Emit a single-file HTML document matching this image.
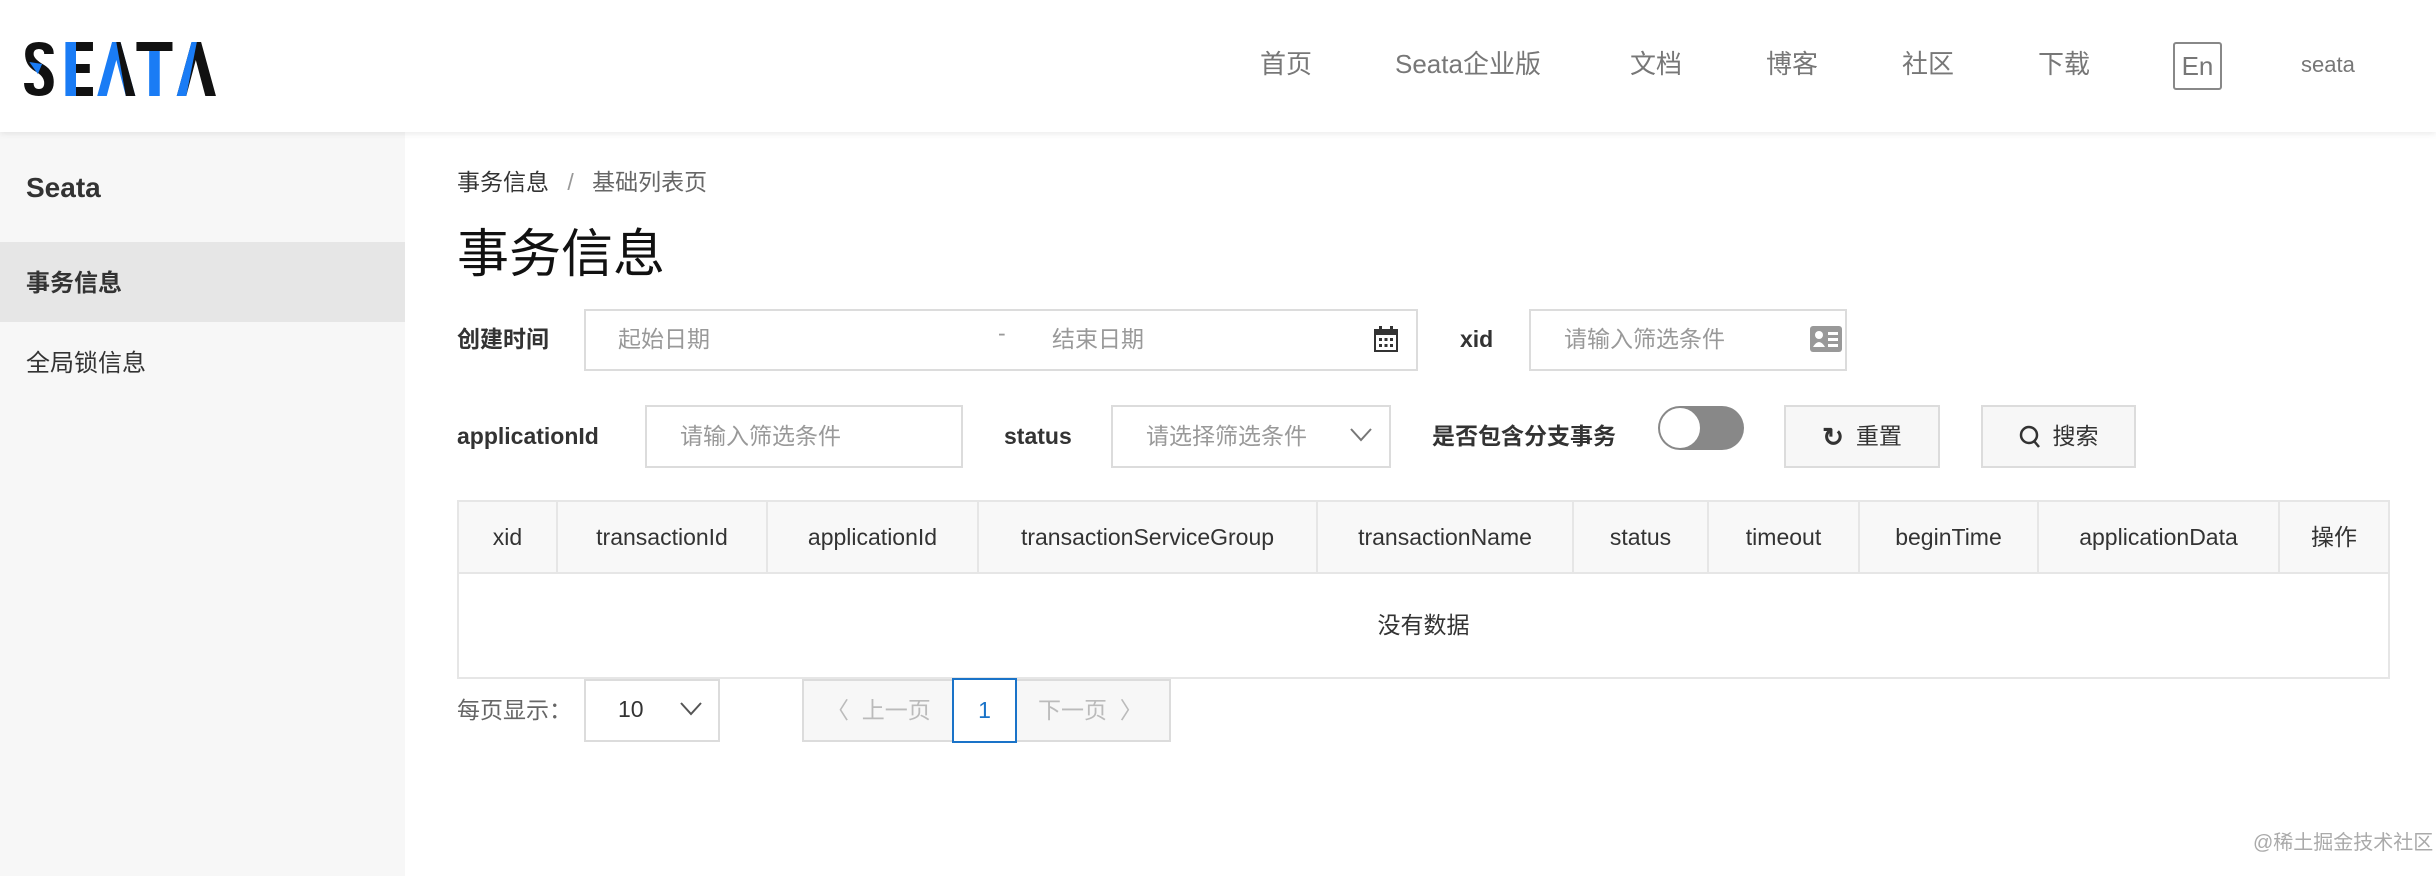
<!DOCTYPE html>
<html><head><meta charset="utf-8"><style>
*{box-sizing:border-box;margin:0;padding:0}
body{width:2436px;height:876px;position:relative;overflow:hidden;background:#fff;font-family:"Liberation Sans","Noto Sans CJK SC",sans-serif;color:#333}
.a{position:absolute;white-space:nowrap}
.hdr{position:absolute;left:0;top:0;width:2436px;height:132px;background:#fff;box-shadow:0 2px 6px rgba(0,0,0,.08);z-index:2}
.nav{position:absolute;top:44px;font-size:26px;color:#777;line-height:40px}
.side{position:absolute;left:0;top:132px;width:405px;height:744px;background:#f7f7f7}
.box{position:absolute;border:2px solid #dcdcdc;background:#fff}
.ph{color:#999;font-size:23px}
.lbl{font-size:23px;font-weight:bold;color:#333}
.btn{position:absolute;border:2px solid #dcdcdc;background:#f7f7f7;font-size:23px;color:#333;display:flex;align-items:center;justify-content:center;gap:12px;line-height:1}
table{position:absolute;left:457px;top:500px;width:1933px;border-collapse:collapse;font-size:23px}
th{height:72px;background:#f8f8f8;border:2px solid #e6e6e6;font-weight:normal;color:#333;line-height:1}
td{height:105px;border:2px solid #e6e6e6;text-align:center;color:#333;line-height:1}
</style></head><body>
<div class="hdr">
 <svg class="a" style="left:23px;top:42px" width="194" height="54" viewBox="0 0 183 54" preserveAspectRatio="none">
  <path d="M2 12 Q2 0 15 0 Q29 0 29 12 L20 12 Q20 7 15 7 Q10 7 10 12 Q10 17 20 23 Q29 29 29 40 Q29 54 15 54 Q1 54 1 41 L10 41 Q10 47 15 47 Q20 47 20 41 Q20 34 11 29 Q2 23 2 12Z" fill="#111"/>
  <path d="M6 20 L18 22 L14 32 Z" fill="#1a7cf5"/>
  <rect x="40" y="0" width="10" height="54" fill="#1a7cf5"/><rect x="50" y="0" width="16" height="9" fill="#111"/><rect x="50" y="22" width="13" height="9" fill="#111"/><rect x="50" y="45" width="16" height="9" fill="#111"/>
  <path d="M70 54 L84 0 L92 0 L106 54 L97 54 L88 18 L79 54Z" fill="#1a7cf5"/><path d="M88 0 L92 0 L106 54 L97 54 Z" fill="#111"/>
  <rect x="107" y="0" width="34" height="9" fill="#111"/><rect x="119" y="9" width="10" height="45" fill="#1a7cf5"/>
  <path d="M145 54 L159 0 L168 0 L182 54 L172 54 L163 18 L154 54Z" fill="#111"/><path d="M145 54 L159 0 L164 0 L154 54Z" fill="#1a7cf5"/>
 </svg>
 <div class="nav a" style="left:1260px">首页</div>
 <div class="nav a" style="left:1395px">Seata企业版</div>
 <div class="nav a" style="left:1630px">文档</div>
 <div class="nav a" style="left:1766px">博客</div>
 <div class="nav a" style="left:1902px">社区</div>
 <div class="nav a" style="left:2038px">下载</div>
 <div class="a" style="left:2173px;top:42px;width:49px;height:48px;border:2px solid #888;border-radius:3px;font-size:26px;color:#777;text-align:center;line-height:44px">En</div>
 <div class="a" style="left:2301px;top:52px;font-size:22px;color:#777">seata</div>
</div>
<div class="side">
 <div class="a" style="left:26px;top:40px;font-size:28px;font-weight:bold;color:#333">Seata</div>
 <div class="a" style="left:0;top:110px;width:405px;height:80px;background:#e6e6e6"></div>
 <div class="a" style="left:26px;top:131px;font-size:24px;font-weight:bold;color:#333">事务信息</div>
 <div class="a" style="left:26px;top:211px;font-size:24px;color:#333">全局锁信息</div>
</div>
<div class="a" style="left:457px;top:163px;font-size:23px;color:#333">事务信息 <span style="color:#999;margin:0 12px">/</span> <span style="color:#666">基础列表页</span></div>
<div class="a" style="left:457px;top:212px;font-size:52px;color:#111">事务信息</div>

<div class="a lbl" style="left:457px;top:320px">创建时间</div>
<div class="box" style="left:584px;top:309px;width:834px;height:62px"></div>
<div class="a ph" style="left:618px;top:320px">起始日期</div>
<div class="a ph" style="left:998px;top:320px">-</div>
<div class="a ph" style="left:1052px;top:320px">结束日期</div>
<svg class="a" style="left:1374px;top:326px" width="24" height="26" viewBox="0 0 24 26"><rect x="1" y="4" width="22" height="21" fill="none" stroke="#333" stroke-width="2"/><rect x="1" y="4" width="22" height="5" fill="#333"/><rect x="5" y="0" width="3" height="6" fill="#333"/><rect x="16" y="0" width="3" height="6" fill="#333"/><g fill="#333"><rect x="5" y="12" width="3" height="3"/><rect x="10.5" y="12" width="3" height="3"/><rect x="16" y="12" width="3" height="3"/><rect x="5" y="18" width="3" height="3"/><rect x="10.5" y="18" width="3" height="3"/><rect x="16" y="18" width="3" height="3"/></g></svg>
<div class="a lbl" style="left:1460px;top:326px">xid</div>
<div class="box" style="left:1529px;top:309px;width:318px;height:62px"></div>
<div class="a ph" style="left:1564px;top:320px">请输入筛选条件</div>
<svg class="a" style="left:1810px;top:326px" width="32" height="26" viewBox="0 0 32 26"><rect width="32" height="26" rx="3" fill="#999"/><circle cx="9" cy="9" r="4" fill="#fff"/><path d="M3 21 Q9 11 15 21Z" fill="#fff"/><rect x="18" y="6" width="10" height="3" fill="#fff"/><rect x="18" y="12" width="10" height="3" fill="#fff"/><rect x="18" y="18" width="10" height="3" fill="#fff"/></svg>

<div class="a lbl" style="left:457px;top:423px">applicationId</div>
<div class="box" style="left:645px;top:405px;width:318px;height:63px"></div>
<div class="a ph" style="left:680px;top:417px">请输入筛选条件</div>
<div class="a lbl" style="left:1004px;top:423px">status</div>
<div class="box" style="left:1111px;top:405px;width:280px;height:63px"></div>
<div class="a ph" style="left:1146px;top:417px">请选择筛选条件</div>
<svg class="a" style="left:1350px;top:428px" width="22" height="14" viewBox="0 0 22 14"><path d="M1 1 L11 12 L21 1" fill="none" stroke="#777" stroke-width="2"/></svg>
<div class="a lbl" style="left:1432px;top:417px">是否包含分支事务</div>
<div class="a" style="left:1658px;top:406px;width:86px;height:44px;border-radius:22px;background:#888"></div>
<div class="a" style="left:1659px;top:407px;width:42px;height:42px;border-radius:50%;background:#fff;border:1px solid #888"></div>
<div class="btn" style="left:1784px;top:405px;width:156px;height:63px"><span style="font-size:26px;font-weight:bold">↻</span>重置</div>
<div class="btn" style="left:1981px;top:405px;width:155px;height:63px"><svg width="22" height="24" viewBox="0 0 22 24"><circle cx="10" cy="10" r="8" fill="none" stroke="#333" stroke-width="2.5"/><path d="M15 16 L20 22" stroke="#333" stroke-width="2.5"/></svg>搜索</div>

<table><tr>
<th style="width:99px">xid</th><th style="width:210px">transactionId</th><th style="width:211px">applicationId</th><th style="width:339px">transactionServiceGroup</th><th style="width:256px">transactionName</th><th style="width:135px">status</th><th style="width:151px">timeout</th><th style="width:179px">beginTime</th><th style="width:241px">applicationData</th><th>操作</th>
</tr><tr><td colspan="10">没有数据</td></tr></table>

<div class="a" style="left:457px;top:691px;font-size:23px;color:#666">每页显示：</div>
<div class="box" style="left:584px;top:679px;width:136px;height:63px"></div>
<div class="a" style="left:618px;top:696px;font-size:23px;color:#333">10</div>
<svg class="a" style="left:680px;top:702px" width="22" height="14" viewBox="0 0 22 14"><path d="M1 1 L11 12 L21 1" fill="none" stroke="#555" stroke-width="2"/></svg>
<div class="box" style="left:802px;top:679px;width:369px;height:63px;background:#f7f7f7"></div>
<div class="a" style="left:826px;top:691px;font-size:23px;color:#bbb">〈 &nbsp;上一页</div>
<div class="a" style="left:1038px;top:691px;font-size:23px;color:#bbb">下一页 &nbsp;〉</div>
<div class="a" style="left:952px;top:678px;width:65px;height:65px;border:2px solid #1a73c8;background:#fff;color:#1a73c8;font-size:23px;text-align:center;line-height:61px">1</div>
<div class="a" style="left:2253px;top:826px;font-size:20px;color:#aaa">@稀土掘金技术社区</div>
</body></html>
